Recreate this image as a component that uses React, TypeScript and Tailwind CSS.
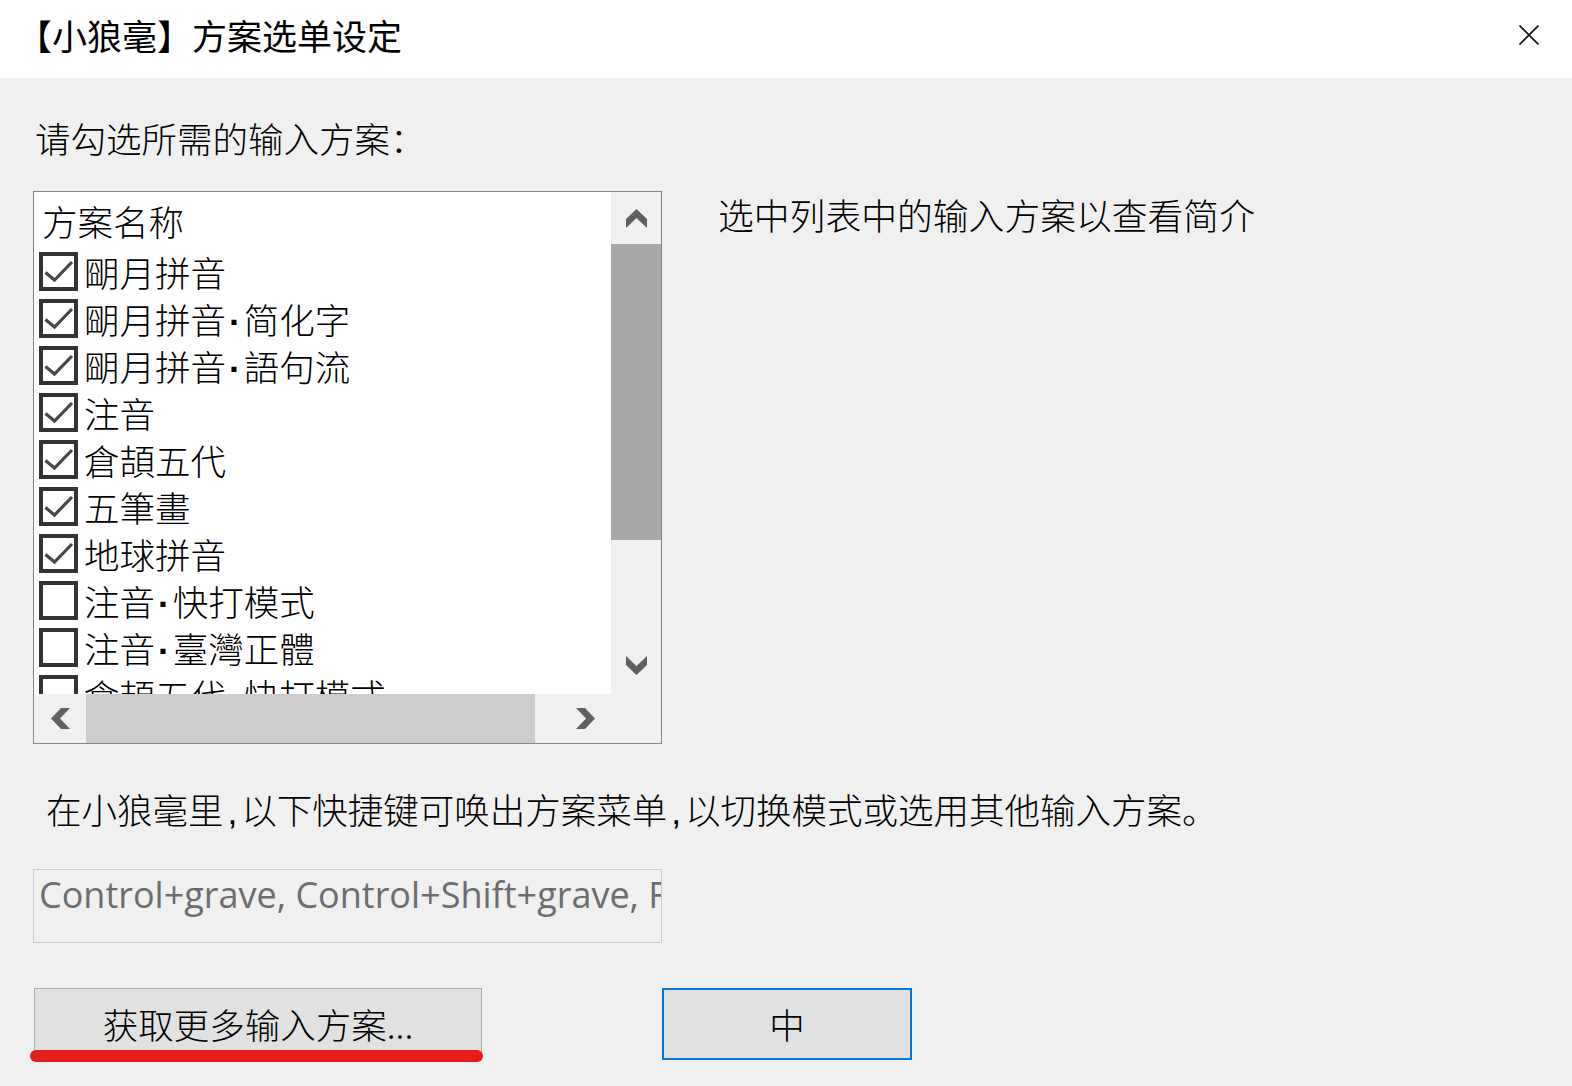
import React from 'react';

interface Scheme {
  name: string;
  checked: boolean;
}

const schemes: Scheme[] = [
  { name: '朙月拼音', checked: true },
  { name: '朙月拼音·简化字', checked: true },
  { name: '朙月拼音·語句流', checked: true },
  { name: '注音', checked: true },
  { name: '倉頡五代', checked: true },
  { name: '五筆畫', checked: true },
  { name: '地球拼音', checked: true },
  { name: '注音·快打模式', checked: false },
  { name: '注音·臺灣正體', checked: false },
  { name: '倉頡五代·快打模式', checked: false },
];

// half-width punctuation, as the dialog font draws it
const Half: React.FC<{ ch: string; bold?: boolean }> = ({ ch, bold }) => (
  <span
    className={`inline-block w-[17.75px] text-center font-['Liberation_Sans',sans-serif] ${bold ? 'font-bold' : 'font-normal'}`}
  >
    {ch}
  </span>
);

const SchemeName: React.FC<{ text: string }> = ({ text }) => (
  <>
    {text.split('·').map((part, i) => (
      <React.Fragment key={i}>
        {i > 0 && <Half ch="·" bold />}
        {part}
      </React.Fragment>
    ))}
  </>
);

const CheckBox: React.FC<{ checked: boolean }> = ({ checked }) => (
  <div className="relative h-[39px] w-[39px] shrink-0 border-[4px] border-[#333333] bg-white">
    {checked && (
      <svg className="absolute left-[-4px] top-[-4px]" width="39" height="39" viewBox="0 0 39 39">
        <polyline points="6.5,20.5 15.5,28 33,10" fill="none" stroke="#474747" strokeWidth="3.2" />
      </svg>
    )}
  </div>
);

const ArrowUp = () => (
  <svg width="21" height="19" viewBox="0 0 21 19">
    <polygon points="0,10 10.5,0 21,10 21,19 10.5,9 0,19" fill="#606060" />
  </svg>
);

const ArrowDown = () => (
  <svg width="21" height="19" viewBox="0 0 21 19">
    <polygon points="0,0 10.5,10 21,0 21,9 10.5,19 0,9" fill="#606060" />
  </svg>
);

const ArrowLeft = () => (
  <svg width="19" height="21" viewBox="0 0 19 21">
    <polygon points="10,0 0,10.5 10,21 19,21 9,10.5 19,0" fill="#606060" />
  </svg>
);

const ArrowRight = () => (
  <svg width="19" height="21" viewBox="0 0 19 21">
    <polygon points="9,0 19,10.5 9,21 0,21 10,10.5 0,0" fill="#606060" />
  </svg>
);

const SchemeList = () => (
  <div className="grid h-[553px] w-[629px] shrink-0 grid-cols-[577px_50px] grid-rows-[502px_49px] border border-[#828790] bg-white">
    <div className="overflow-hidden">
      <div className="h-[56px] pl-[8px] pt-[11px]">方案名称</div>
      {schemes.map((s) => (
        <div key={s.name} className="flex h-[47px] items-center whitespace-nowrap pl-[5px]">
          <CheckBox checked={s.checked} />
          <span className="ml-[6px] h-[35.5px]">
            <SchemeName text={s.name} />
          </span>
        </div>
      ))}
    </div>

    <div className="flex flex-col bg-[#f0f0f0]">
      <div className="flex h-[52px] items-center justify-center">
        <ArrowUp />
      </div>
      <div className="h-[296px] bg-[#a8a8a8]" />
      <div className="flex-1" />
      <div className="flex h-[52px] items-center justify-center pb-[6px]">
        <ArrowDown />
      </div>
    </div>

    <div className="flex bg-[#f0f0f0]">
      <div className="flex w-[52px] items-center justify-center">
        <ArrowLeft />
      </div>
      <div className="w-[449px] bg-[#cdcdcd]" />
      <div className="flex-1" />
      <div className="flex w-[52px] items-center justify-center">
        <ArrowRight />
      </div>
    </div>
    <div className="bg-[#f0f0f0]" />
  </div>
);

export default function App() {
  return (
    <div className="h-[1086px] w-[1572px] overflow-hidden bg-[#f0f0f0] font-['Noto_Sans_CJK_SC',sans-serif] text-black">
      <div className="flex h-[78px] justify-between bg-white pl-[17px] pr-[33px] pt-[17px]">
        <h1 className="text-[35px] leading-[35px]">【小狼毫】方案选单设定</h1>
        <svg className="mt-[8px]" width="20" height="20" viewBox="0 0 20 20">
          <path d="M0.5 0.5 L19.5 19.5 M19.5 0.5 L0.5 19.5" stroke="#1a1a1a" strokeWidth="1.7" />
        </svg>
      </div>

      <div className="pl-[33px] pt-[42px] text-[35.5px] font-light leading-[35.5px]">
        <p className="ml-[2px]">请勾选所需的输入方案：</p>

        <div className="mt-[35.5px] flex items-start">
          <SchemeList />
          <p className="ml-[56px] mt-[6px] text-[35.8px]">选中列表中的输入方案以查看简介</p>
        </div>

        <p className="ml-[13px] mt-[47px] h-[35.5px] overflow-visible whitespace-nowrap">
          在小狼毫里<Half ch="," />以下快捷键可唤出方案菜单<Half ch="," />以切换模式或选用其他输入方案。
        </p>

        <div className="mt-[42.5px] h-[74px] w-[629px] overflow-hidden whitespace-nowrap border border-[#cccccc] bg-[#f0f0f0] pl-[5px] pt-[7px] font-['Open_Sans',sans-serif] text-[36px] font-normal leading-[35px] text-[#6d6d6d]">
          Control+grave, Control+Shift+grave, F4
        </div>

        <div className="mt-[45px] flex items-start">
          <div className="relative ml-[1px]">
            <button className="flex h-[72px] w-[448px] items-center justify-center border border-[#adadad] bg-[#e1e1e1]">
              获取更多输入方案...
            </button>
            <div className="absolute left-[-4px] top-[62px] h-[12px] w-[453px] rounded-full bg-[#e41c1c]" />
          </div>
          <button className="ml-[180px] flex h-[72px] w-[250px] items-center justify-center border-2 border-[#0078d7] bg-[#e1e1e1]">
            中
          </button>
        </div>
      </div>
    </div>
  );
}
